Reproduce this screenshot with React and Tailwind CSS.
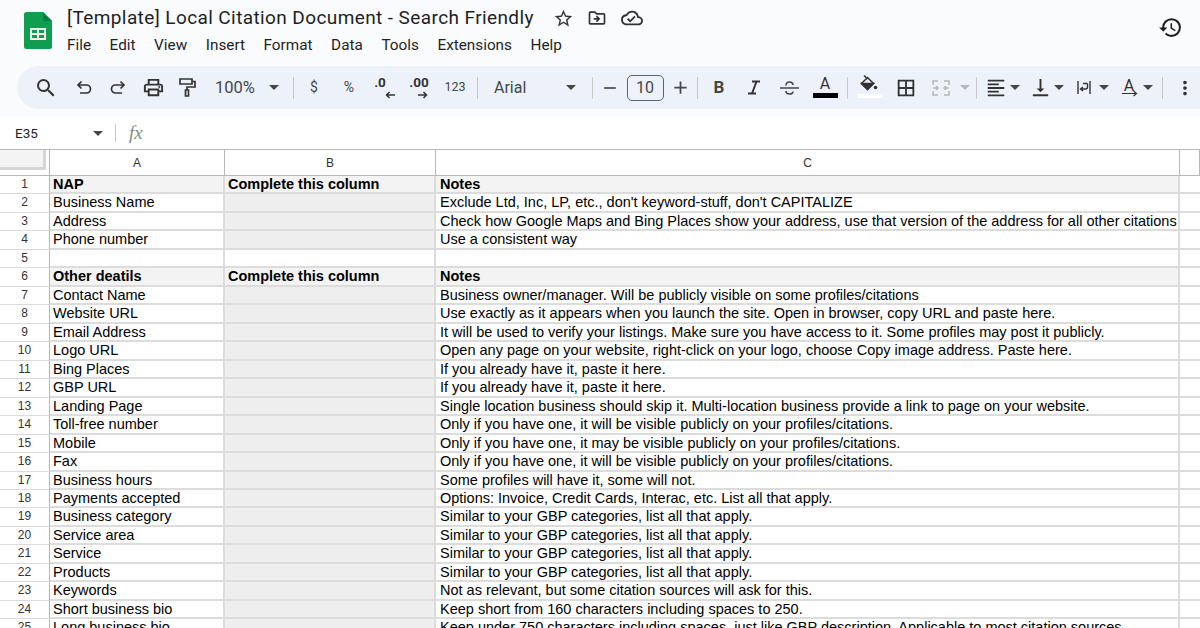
import React from "react";
import { MdSearch, MdOutlinePrint, MdBorderAll, MdFormatAlignLeft, MdVerticalAlignBottom, MdMoreVert, MdStarBorder, MdOutlineDriveFileMove, MdOutlineCloudDone, MdHistory, MdAdd, MdRemove } from "react-icons/md";

const rows = [
  ["NAP", "Complete this column", "Notes", "h"],
  ["Business Name", "", "Exclude Ltd, Inc, LP, etc., don't keyword-stuff, don't CAPITALIZE"],
  ["Address", "", "Check how Google Maps and Bing Places show your address, use that version of the address for all other citations"],
  ["Phone number", "", "Use a consistent way"],
  ["", "", "", "e"],
  ["Other deatils", "Complete this column", "Notes", "h"],
  ["Contact Name", "", "Business owner/manager. Will be publicly visible on some profiles/citations"],
  ["Website URL", "", "Use exactly as it appears when you launch the site. Open in browser, copy URL and paste here."],
  ["Email Address", "", "It will be used to verify your listings. Make sure you have access to it. Some profiles may post it publicly."],
  ["Logo URL", "", "Open any page on your website, right-click on your logo, choose Copy image address. Paste here."],
  ["Bing Places", "", "If you already have it, paste it here."],
  ["GBP URL", "", "If you already have it, paste it here."],
  ["Landing Page", "", "Single location business should skip it. Multi-location business provide a link to page on your website."],
  ["Toll-free number", "", "Only if you have one, it will be visible publicly on your profiles/citations."],
  ["Mobile", "", "Only if you have one, it may be visible publicly on your profiles/citations."],
  ["Fax", "", "Only if you have one, it will be visible publicly on your profiles/citations."],
  ["Business hours", "", "Some profiles will have it, some will not."],
  ["Payments accepted", "", "Options: Invoice, Credit Cards, Interac, etc. List all that apply."],
  ["Business category", "", "Similar to your GBP categories, list all that apply."],
  ["Service area", "", "Similar to your GBP categories, list all that apply."],
  ["Service", "", "Similar to your GBP categories, list all that apply."],
  ["Products", "", "Similar to your GBP categories, list all that apply."],
  ["Keywords", "", "Not as relevant, but some citation sources will ask for this."],
  ["Short business bio", "", "Keep short from 160 characters including spaces to 250."],
  ["Long business bio", "", "Keep under 750 characters including spaces, just like GBP description. Applicable to most citation sources."],
];

const Caret = ({ c = "#444746" }) => (
  <svg className="shrink-0" width="10" height="5" viewBox="0 0 10 5"><path d="M0 0h10L5 5z" fill={c} /></svg>
);
const Div = () => <div className="w-px h-[22px] bg-[#c7c7c7] shrink-0" />;
const Slot = ({ w, children, cls = "" }) => (
  <div style={{ width: w }} className={"shrink-0 flex items-center justify-center text-[#444746] " + cls}>{children}</div>
);
const stroke = { fill: "none", stroke: "#333", strokeWidth: 1.7 };

function Toolbar() {
  return (
    <div className="ml-[17px] h-[43px] bg-[#edf2fa] rounded-l-[22px] flex items-center pl-[12px] font-['Roboto',sans-serif]">
      <Slot w={34}><MdSearch size={24} className="text-[#333]" /></Slot>
      <Slot w={42}>
        <svg width="16" height="16" viewBox="0 0 16 16" {...stroke}><path d="M5.5 1.5 2 5l3.5 3.5M2 5h8.5a4 4 0 0 1 0 8H4" /></svg>
      </Slot>
      <Slot w={26}>
        <svg width="16" height="16" viewBox="0 0 16 16" {...stroke}><path d="M10.5 1.5 14 5l-3.500 3.500M14 5H5.500a4 4 0 0 0 0 8H12" /></svg>
      </Slot>
      <Slot w={44}><MdOutlinePrint size={23} className="text-[#333]" /></Slot>
      <Slot w={24}>
        <svg width="17" height="19" viewBox="0 0 17 19" {...stroke}><path d="M1 1h12v5H1zM13 3.500h3V9H8v3M6.500 12h3v6h-3z" /></svg>
      </Slot>
      <Slot w={64} cls="text-[16.5px] pl-[8px] pt-[1px]">100%</Slot>
      <Slot w={22}><Caret /></Slot>
      <Slot w={8} />
      <Div />
      <Slot w={40} cls="text-[14px]">$</Slot>
      <Slot w={30} cls="text-[14px]">%</Slot>
      <Slot w={40} cls="relative h-[43px]">
        <span className="relative -top-[5px] -left-[4px] text-[13.5px] font-bold text-[#333]">.0</span>
        <svg className="absolute left-[21px] top-[25px]" width="10" height="8" viewBox="0 0 10 8"><path d="M10 4H2M4.500 1 1.500 4l3 3" fill="none" stroke="#333" strokeWidth="1.5" /></svg>
      </Slot>
      <Slot w={30} cls="relative h-[43px]">
        <span className="relative -top-[5px] text-[13.5px] font-bold text-[#333]">.00</span>
        <svg className="absolute left-[14px] top-[25px]" width="10" height="8" viewBox="0 0 10 8"><path d="M0 4h8M5.500 1l3 3-3 3" fill="none" stroke="#333" strokeWidth="1.5" /></svg>
      </Slot>
      <Slot w={42} cls="text-[12.5px]">123</Slot>
      <Slot w={1} />
      <Div />
      <div className="w-[80px] shrink-0 pl-[16px] text-[16px] text-[#444746]">Arial</div>
      <Slot w={26}><Caret /></Slot>
      <Slot w={8} />
      <Div />
      <Slot w={34}><MdRemove size={20} /></Slot>
      <div className="w-[37px] h-[26px] shrink-0 border border-[#5f6368] rounded-[5px] flex items-center justify-center pr-[1px] text-[16px] text-[#444746]">10</div>
      <Slot w={32}><MdAdd size={21} /></Slot>
      <Slot w={1} />
      <Div />
      <Slot w={42} cls="font-bold text-[17px] text-[#333]">B</Slot>
      <Slot w={28}>
        <svg width="14" height="15" viewBox="0 0 14 15" fill="none" stroke="#333" strokeWidth="2"><path d="M5 1.500h8M9.500 1.500 5 13.500M1 13.500h8" /></svg>
      </Slot>
      <Slot w={42}>
        <svg width="19" height="16" viewBox="0 0 19 16" fill="none" stroke="#444746" strokeWidth="1.6"><path d="M0 8h19M6 5.500C6 1 13 1 13 5M6 11c0 4 7 4 7 0.500" /></svg>
      </Slot>
      <Slot w={30} cls="relative h-[43px]">
        <span className="relative -top-[4px] text-[16px] text-[#333]">A</span>
        <span className="absolute left-[3px] top-[27px] w-[25px] h-[5px] bg-black" />
      </Slot>
      <Slot w={7} />
      <Div />
      <Slot w={42} cls="relative h-[43px]">
        <svg className="relative -top-[5px]" width="18" height="16" viewBox="0 0 18 16" fill="none" stroke="#333" strokeWidth="1.5"><path d="M1.500 8.500 7.500 2.500 13.500 8.500 7.500 14.500zM4 0.500 7.500 4" /><path d="M1.500 8.500h12l-6 6z" fill="#333" /><circle cx="15.500" cy="12.500" r="1.800" fill="#333" stroke="none" /></svg>
        <span className="absolute left-[9px] top-[28px] w-[25px] h-[4px] bg-white" />
      </Slot>
      <Slot w={32}><MdBorderAll size={22} className="text-[#333]" /></Slot>
      <Slot w={38}>
        <svg width="18" height="18" viewBox="0 0 18 18" fill="none" stroke="#b5b7b9" strokeWidth="1.5"><path d="M1 6V2h5M12 2h5v4M1 12v4h5M12 16h5v-4M1 9h5M4 7l2 2-2 2M17 9h-5M14 7l-2 2 2 2" /></svg>
      </Slot>
      <Caret c="#b5b7b9" />
      <Slot w={6} />
      <Div />
      <Slot w={33} cls="pl-[5px]"><MdFormatAlignLeft size={22} className="text-[#333]" /></Slot>
      <Caret />
      <Slot w={34} cls="pl-[6px]"><MdVerticalAlignBottom size={23} className="text-[#333]" /></Slot>
      <Caret />
      <Slot w={35} cls="pl-[5px]">
        <svg width="14" height="15" viewBox="0 0 14 15" fill="none" stroke="#333" strokeWidth="1.4"><path d="M1 1v13M13 1v13M10.500 3.500H6M10.500 3.500V7a2 2 0 0 1-2 2H4M6 7 3.500 9 6 11" /></svg>
      </Slot>
      <Caret />
      <Slot w={34} cls="pl-[6px] relative h-[43px]">
        <span className="relative -top-[2px] text-[16px] text-[#333]">A</span>
        <svg className="absolute left-[13px] top-[24px]" width="16" height="7" viewBox="0 0 16 7" fill="none" stroke="#333" strokeWidth="1.2"><path d="M0 3.500h14M11.500 1 14.500 3.500 11.500 6" /></svg>
      </Slot>
      <Caret />
      <Slot w={9} />
      <Div />
      <Slot w={37} cls="pl-[7px]"><MdMoreVert size={22} className="text-[#333]" /></Slot>
    </div>
  );
}

function SheetsLogo() {
  return (
    <svg width="28" height="37" viewBox="0 0 28 37">
      <path d="M2.500 0H19l9 9v25.500a2.500 2.500 0 0 1-2.500 2.500h-23A2.500 2.500 0 0 1 0 34.500v-32A2.500 2.500 0 0 1 2.500 0z" fill="#0f9d50" />
      <path d="M19 0l9 9h-7a2 2 0 0 1-2-2z" fill="#0b7d40" />
      <path d="M6 16h16v12H6z" fill="#f1f1f1" />
      <path d="M8 18h5v3H8zM15 18h5v3h-5zM8 23h5v3H8zM15 23h5v3h-5z" fill="#0f9d50" />
    </svg>
  );
}

export default function App() {
  return (
    <div className="w-[1200px] h-[628px] overflow-hidden bg-[#f9fbfd] flex flex-col font-['Roboto',sans-serif]">
      <header className="h-[66px] shrink-0 flex">
        <div className="w-[67px] shrink-0 pl-[24px] pt-[12px]"><SheetsLogo /></div>
        <div className="flex-1 flex flex-col">
          <div className="h-[24px] mt-[6px] flex items-center">
            <span className="text-[19px] tracking-[0.4px] text-[#1f1f1f] leading-[24px] w-[486px] shrink-0 whitespace-nowrap">[Template] Local Citation Document - Search Friendly</span>
            <MdStarBorder size={21} className="text-[#333]" />
            <MdOutlineDriveFileMove size={20} className="text-[#333] ml-[13px]" />
            <MdOutlineCloudDone size={22} className="text-[#333] ml-[14px]" />
          </div>
          <nav className="h-[20px] mt-[5px] flex items-center gap-[18.6px] text-[15.3px] text-[#1f1f1f] leading-[20px]">
            {["File", "Edit", "View", "Insert", "Format", "Data", "Tools", "Extensions", "Help"].map((m) => <span key={m}>{m}</span>)}
          </nav>
        </div>
        <div className="w-[56px] shrink-0 pt-[15px] pl-[14px]"><MdHistory size={25} className="text-[#1f1f1f]" /></div>
      </header>

      <Toolbar />
      <div className="h-[8px] shrink-0" />

      <div className="h-[32px] shrink-0 bg-white flex items-center text-[14px] text-[#1f1f1f]">
        <div className="w-[93px] shrink-0 pl-[15px] text-[13.5px]">E35</div>
        <Caret />
        <div className="w-px h-[18px] bg-[#c7c7c7] ml-[12px]" />
        <span className="ml-[13px] font-['Liberation_Serif',serif] italic text-[19px] text-[#8a8a8a]">fx</span>
      </div>

      <div className="flex-1 min-h-0 bg-white overflow-hidden font-['Liberation_Sans',sans-serif] border-t border-[#b7b7b7]">
        <div className="grid grid-cols-[50px_175px_211px_744px_1fr] h-[26px] border-b border-[#b7b7b7] text-[12px] text-[#333]">
          <div className="border-r border-[#b7b7b7]">
            <div className="w-[46px] h-[20px] bg-[#f4f4f4] border-r-[3px] border-b-[3px] border-[#d6d6d6]" />
          </div>
          {["A", "B", "C", ""].map((c) => (
            <div key={c} className="border-r border-[#b7b7b7] flex items-center justify-center">{c}</div>
          ))}
        </div>
        {rows.map((r, i) => {
          const h = r[3] === "h";
          return (
            <div key={i} className={"grid grid-cols-[50px_175px_211px_744px_1fr] h-[18.48px] leading-[16px] whitespace-nowrap text-[14.5px] text-black " + (h ? "font-bold" : "")}>
              <div className="border-r border-b border-r-[#b7b7b7] border-b-[#dcdcdc] bg-white text-[12px] font-normal text-[#333] text-center">{i + 1}</div>
              <div className={"border-r-2 border-b-2 border-[#dcdcdc] pl-[3px] " + (h ? "bg-[#f3f3f3]" : "")}>{r[0]}</div>
              <div className={"border-r-2 border-b-2 border-[#dcdcdc] pl-[3px] " + (h ? "bg-[#f3f3f3]" : r[3] === "e" ? "" : "bg-[#eeeeee]")}>{r[1]}</div>
              <div className={"border-r-2 border-b-2 border-[#dcdcdc] pl-[4px] " + (h ? "bg-[#f3f3f3]" : "")}>{r[2]}</div>
              <div className="border-b-2 border-[#dcdcdc]" />
            </div>
          );
        })}
      </div>
    </div>
  );
}
